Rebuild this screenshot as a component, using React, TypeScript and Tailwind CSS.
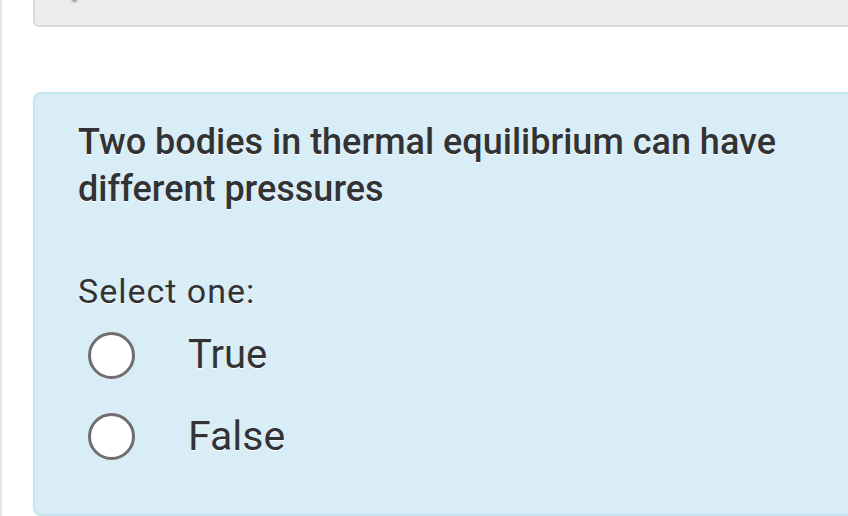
import React from "react";

function Radio() {
  return (
    <span className="block w-[47px] h-[47px] rounded-full border-[3px] border-[#6f6f6f] bg-white shrink-0" />
  );
}

export default function App() {
  const shadow = { textShadow: "0 1px 0 #ffffff" };
  return (
    <div
      className="w-[848px] h-[516px] overflow-hidden bg-white flex"
      style={{ fontFamily: "Roboto, 'Noto Sans', sans-serif" }}
    >
      <div className="w-[2px] h-full bg-[#e4e4e4] shrink-0" />
      <div className="flex-1 flex flex-col pl-[31px]">
        <div className="relative h-[27px] bg-[#ececec] border-l-2 border-b-2 border-[#dadada] rounded-bl-[6px] shrink-0">
          <span className="absolute left-[37px] top-[-3px] w-[5px] h-[5px] rounded-full bg-[#8a8a8a] blur-[1px]" />
        </div>
        <div className="mt-[65px] flex-1 bg-[#d9edf7] border-2 border-r-0 border-[#c3e5ee] rounded-l-[8px] pl-[43px] pt-[25px] text-[#313335]">
          <div className="text-[36px] leading-[47px] font-medium w-[740px]" style={shadow}>
            Two bodies in thermal equilibrium can have different pressures
          </div>
          <div className="mt-[58px] text-[34px] leading-[40px] tracking-[1px]" style={shadow}>
            Select one:
          </div>
          <div className="mt-[20px] flex flex-col gap-[33px]">
            <div className="flex items-center h-[48px] pl-[10px]">
              <Radio />
              <span className="ml-[53px] text-[40px] leading-[48px]" style={shadow}>True</span>
            </div>
            <div className="flex items-center h-[48px] pl-[10px]">
              <Radio />
              <span className="ml-[53px] text-[41px] leading-[48px]" style={shadow}>False</span>
            </div>
          </div>
        </div>
      </div>
    </div>
  );
}
